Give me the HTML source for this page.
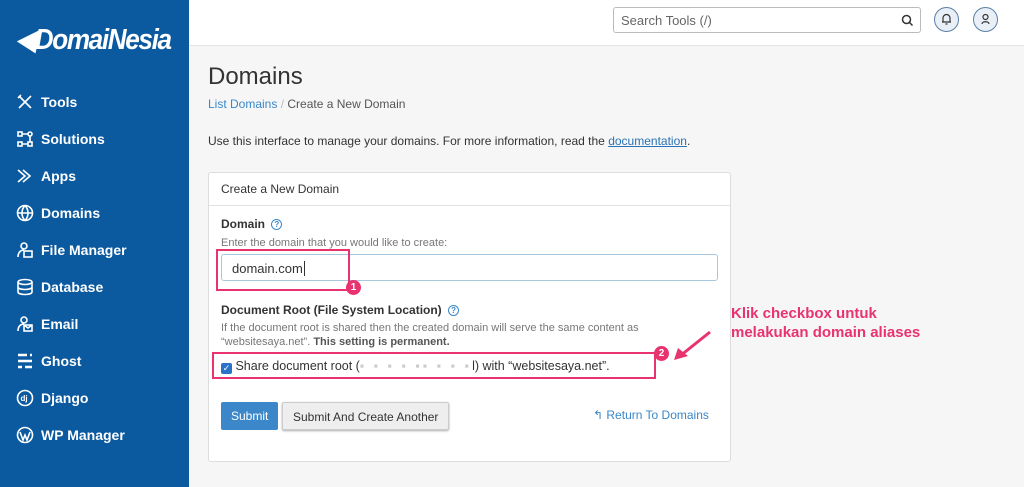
<!DOCTYPE html>
<html><head><meta charset="utf-8"><style>
*{box-sizing:border-box;margin:0;padding:0}
body{width:1024px;height:487px;overflow:hidden;font-family:"Liberation Sans",sans-serif;background:#f6f6f6;position:relative;color:#333}
.sb{position:absolute;left:0;top:0;width:189px;height:487px;background:#0b5aa0;color:#fff}
.logo{position:absolute;left:16px;top:22px;font-size:29px;font-weight:bold;font-style:italic;letter-spacing:-1.5px;transform:scaleX(.9);transform-origin:left}
.nav{position:absolute;left:16px;font-size:14px;font-weight:bold;display:flex;align-items:center}
.nav svg{width:18px;height:18px;margin-right:7px;stroke:#fff;fill:none;stroke-width:1.6}
.top{position:absolute;left:189px;top:0;right:0;height:46px;background:#fff;border-bottom:1px solid #e4e4e4}
.search{position:absolute;left:613px;top:7px;width:308px;height:26px;border:1px solid #bbb;border-radius:3px;background:#fff;font-size:13px;color:#666;padding:5px 7px}
.circ{position:absolute;top:7px;width:25px;height:25px;border-radius:50%;border:1px solid #5b7fa6;background:#e9eff6}
h1{position:absolute;left:208px;top:63px;font-size:24px;font-weight:normal;color:#333}
.bc{position:absolute;left:208px;top:97px;font-size:12px;color:#555}
.bc a{color:#3b87c9}
.intro{position:absolute;left:208px;top:134px;font-size:12px;color:#333}
.intro a{color:#2a72b4;text-decoration:underline}
.panel{position:absolute;left:208px;top:172px;width:523px;height:290px;background:#fff;border:1px solid #ddd;border-radius:3px}
.ph{height:33px;border-bottom:1px solid #e2e2e2;padding:9px 12px;font-size:12px;color:#333}
.t{position:absolute;font-size:12px}
.b{font-weight:bold}
.g{color:#777}
.q{display:inline-block;width:11px;height:11px;border:1px solid #3b87c9;border-radius:50%;font-size:8px;color:#3b87c9;text-align:center;line-height:9px;vertical-align:1px;margin-left:3px}
.inp{position:absolute;left:221px;top:254px;width:497px;height:27px;border:1px solid #a8c8e0;border-radius:3px;font-size:13px;padding:6px 10px}
.red{position:absolute;border:2px solid #e8336f}
.num{position:absolute;width:15px;height:15px;border-radius:50%;background:#e8336f;color:#fff;font-size:10px;font-weight:bold;text-align:center;line-height:15px}
.btn{position:absolute;top:402px;height:28px;font-size:12px;border-radius:2px;padding:7px 10px}
</style></head><body>
<div class="sb">
<div class="logo">◀DomaiNesia</div>
<div class="nav" style="top:93px"><svg viewBox="0 0 18 18"><path d="M3 3l12 12M15 3L3 15M2 5l3-3"/></svg>Tools</div>
<div class="nav" style="top:130px"><svg viewBox="0 0 18 18"><rect x="2" y="2" width="4" height="4"/><rect x="2" y="12" width="4" height="4"/><rect x="12" y="12" width="4" height="4"/><circle cx="14" cy="4" r="2"/><path d="M6 4h6M14 6v6M6 14h6"/></svg>Solutions</div>
<div class="nav" style="top:167px"><svg viewBox="0 0 18 18"><path d="M2 3l7 6-7 6M7 3l7 6-7 6"/></svg>Apps</div>
<div class="nav" style="top:204px"><svg viewBox="0 0 18 18"><circle cx="9" cy="9" r="7.5"/><path d="M1.5 9h15M9 1.5c-4 4-4 11 0 15M9 1.5c4 4 4 11 0 15"/></svg>Domains</div>
<div class="nav" style="top:241px"><svg viewBox="0 0 18 18"><circle cx="8" cy="5" r="3"/><path d="M2 16c0-5 3-7 6-7"/><rect x="8" y="10" width="8" height="6"/></svg>File Manager</div>
<div class="nav" style="top:278px"><svg viewBox="0 0 18 18"><ellipse cx="9" cy="4" rx="7" ry="2.5"/><path d="M2 4v10c0 1.5 3 2.5 7 2.5s7-1 7-2.5V4M2 9c0 1.5 3 2.5 7 2.5s7-1 7-2.5"/></svg>Database</div>
<div class="nav" style="top:315px"><svg viewBox="0 0 18 18"><circle cx="8" cy="5" r="3"/><path d="M2 16c0-5 3-7 6-7"/><rect x="8" y="10" width="8" height="6"/><path d="M8 10l4 3 4-3"/></svg>Email</div>
<div class="nav" style="top:352px"><svg viewBox="0 0 18 18" style="stroke-width:2.5"><path d="M2 3h9M14 3h2M2 9h14M2 15h4M9 15h7"/></svg>Ghost</div>
<div class="nav" style="top:389px"><svg viewBox="0 0 18 18"><circle cx="9" cy="9" r="7.5"/><text x="4.5" y="12" font-size="8" fill="#fff" stroke="none" font-family="Liberation Sans" font-weight="bold">dj</text></svg>Django</div>
<div class="nav" style="top:426px"><svg viewBox="0 0 18 18"><circle cx="9" cy="9" r="7.5"/><path d="M4 6l3 8 2-5 2 5 3-8"/></svg>WP Manager</div>
</div>
<div class="top"></div>
<div class="search">Search Tools (/)<svg style="position:absolute;right:6px;top:6px" width="13" height="13" viewBox="0 0 13 13" fill="none" stroke="#333" stroke-width="1.5"><circle cx="5.5" cy="5.5" r="4"/><path d="M8.5 8.5l3 3"/></svg></div>
<div class="circ" style="left:934px"><svg width="23" height="23" viewBox="0 0 23 23" fill="none" stroke="#333" stroke-width="1.2"><path d="M8 14V10a3.5 3.5 0 017 0v4zM7 14h9M10.5 16h2"/></svg></div>
<div class="circ" style="left:973px"><svg width="23" height="23" viewBox="0 0 23 23" fill="none" stroke="#333" stroke-width="1.2"><circle cx="11.5" cy="9" r="2.5"/><path d="M8 16c0-3 7-3 7 0"/></svg></div>
<h1>Domains</h1>
<div class="bc"><a>List Domains</a> <span style="color:#bbb">/</span> Create a New Domain</div>
<div class="intro">Use this interface to manage your domains. For more information, read the <a>documentation</a>.</div>
<div class="panel"><div class="ph">Create a New Domain</div></div>
<div class="t b" style="left:221px;top:217px">Domain <span class="q">?</span></div>
<div class="t g" style="left:221px;top:237px;font-size:11px">Enter the domain that you would like to create:</div>
<div class="inp">domain.com<span style="border-left:1px solid #333;margin-left:1px"></span></div>
<div class="red" style="left:216px;top:249px;width:134px;height:42px"></div>
<div class="num" style="left:346px;top:280px">1</div>
<div class="t b" style="left:221px;top:303px">Document Root (File System Location) <span class="q">?</span></div>
<div class="t g" style="left:221px;top:322px;font-size:11px">If the document root is shared then the created domain will serve the same content as</div>
<div class="t g" style="left:221px;top:336px;font-size:11px">“websitesaya.net”. <b style="color:#555">This setting is permanent.</b></div>
<div class="t" style="left:221px;top:359px;font-size:12.5px"><span style="display:inline-block;width:11px;height:11px;background:#2a72c9;border-radius:2px;color:#fff;font-size:9px;line-height:11px;text-align:center;vertical-align:-1px">✓</span> Share document root (<span style="color:#ccc;letter-spacing:3px">▪ ▪ ▪ ▪ ▪▪ ▪ ▪ ▪</span>l) with “websitesaya.net”.</div>
<div class="red" style="left:212px;top:352px;width:444px;height:27px"></div>
<div class="num" style="left:654px;top:346px">2</div>
<svg style="position:absolute;left:670px;top:330px" width="45" height="32" viewBox="0 0 45 32"><path d="M40 2L10 26" stroke="#e8336f" stroke-width="3"/><path d="M4 30l4-12 10 8z" fill="#e8336f"/></svg>
<div class="t b" style="left:731px;top:304px;font-size:15px;color:#e8336f;line-height:19px">Klik checkbox untuk<br>melakukan domain aliases</div>
<div class="btn" style="left:221px;background:#3b87c9;color:#fff">Submit</div>
<div class="btn" style="left:282px;background:#eee;border:1px solid #ccc;color:#333;box-shadow:0 1px 2px #aaa">Submit And Create Another</div>
<div class="t" style="left:593px;top:408px;color:#3b87c9">↰ Return To Domains</div>
</body></html>
